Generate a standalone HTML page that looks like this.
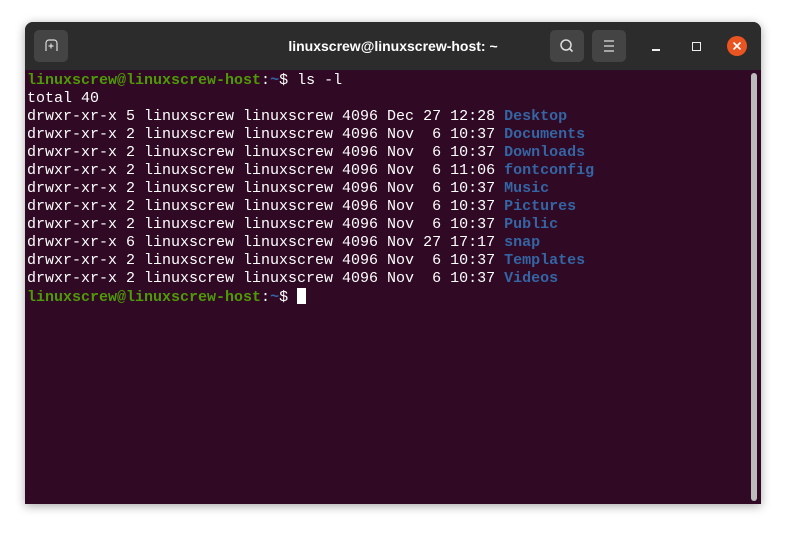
<!DOCTYPE html>
<html><head><style>
body{margin:0;width:786px;height:533px;background:#fff;position:relative;overflow:hidden;font-family:"Liberation Sans",sans-serif}
.win{position:absolute;left:25px;top:22px;width:736px;height:482px;background:#300a24;border-radius:8px 8px 0 0;box-shadow:0 2px 10px rgba(0,0,0,.35);overflow:hidden}
.tb{position:absolute;left:0;top:0;width:736px;height:48px;background:#2c2c2c}
.btn{position:absolute;top:8px;width:34px;height:32px;background:#444;border-radius:5px}
.title{position:absolute;left:0;width:736px;top:16px;text-align:center;color:#fff;font-weight:bold;font-size:14px}
pre{position:absolute;left:2px;top:50px;margin:0;font-family:"Liberation Mono",monospace;font-size:15px;line-height:18px;color:#fff}
.g{color:#4e9a06;font-weight:bold}.b{color:#3465a4;font-weight:bold}
.cur{display:inline-block;width:9px;height:16px;background:#fff;vertical-align:-3px}
.sb{position:absolute;left:726px;top:51px;width:6px;height:428px;background:#bbb;border-radius:3px}
</style></head><body>
<div class="win">
<div class="tb">
<div class="btn" style="left:9px"><svg width="34" height="32"><path d="M12 21V13a3 3 0 0 1 3-3h5a3 3 0 0 1 3 3v8M14.5 16h5M17 13.5v5" stroke="#ddd" stroke-width="1.2" fill="none"/></svg></div>
<div class="title">linuxscrew@linuxscrew-host: ~</div>
<div class="btn" style="left:525px"><svg width="34" height="32"><circle cx="16" cy="15" r="5" stroke="#ddd" stroke-width="1.5" fill="none"/><path d="M19.5 18.5l3 3" stroke="#ddd" stroke-width="1.6"/></svg></div>
<div class="btn" style="left:567px"><svg width="34" height="32"><path d="M12 11h10M12 16h10M12 21h10" stroke="#ddd" stroke-width="1.3"/></svg></div>
<div style="position:absolute;left:627px;top:27px;width:8px;height:1.5px;background:#eee"></div>
<div style="position:absolute;left:667px;top:20px;width:7px;height:7px;border:1.3px solid #eee"></div>
<div style="position:absolute;left:702px;top:14px;width:20px;height:20px;border-radius:50%;background:#e95420"><svg width="20" height="20"><path d="M6.5 6.5l7 7M13.5 6.5l-7 7" stroke="#fff" stroke-width="1.6"/></svg></div>
</div>
<pre><span class="g">linuxscrew@linuxscrew-host</span>:<span style="color:#3465a4;font-weight:bold">~</span>$ ls -l
total 40
drwxr-xr-x 5 linuxscrew linuxscrew 4096 Dec 27 12:28 <span class="b">Desktop</span>
drwxr-xr-x 2 linuxscrew linuxscrew 4096 Nov  6 10:37 <span class="b">Documents</span>
drwxr-xr-x 2 linuxscrew linuxscrew 4096 Nov  6 10:37 <span class="b">Downloads</span>
drwxr-xr-x 2 linuxscrew linuxscrew 4096 Nov  6 11:06 <span class="b">fontconfig</span>
drwxr-xr-x 2 linuxscrew linuxscrew 4096 Nov  6 10:37 <span class="b">Music</span>
drwxr-xr-x 2 linuxscrew linuxscrew 4096 Nov  6 10:37 <span class="b">Pictures</span>
drwxr-xr-x 2 linuxscrew linuxscrew 4096 Nov  6 10:37 <span class="b">Public</span>
drwxr-xr-x 6 linuxscrew linuxscrew 4096 Nov 27 17:17 <span class="b">snap</span>
drwxr-xr-x 2 linuxscrew linuxscrew 4096 Nov  6 10:37 <span class="b">Templates</span>
drwxr-xr-x 2 linuxscrew linuxscrew 4096 Nov  6 10:37 <span class="b">Videos</span>
<span class="g">linuxscrew@linuxscrew-host</span>:<span style="color:#3465a4;font-weight:bold">~</span>$ <span class="cur"></span></pre>
<div class="sb"></div>
</div>
</body></html>
